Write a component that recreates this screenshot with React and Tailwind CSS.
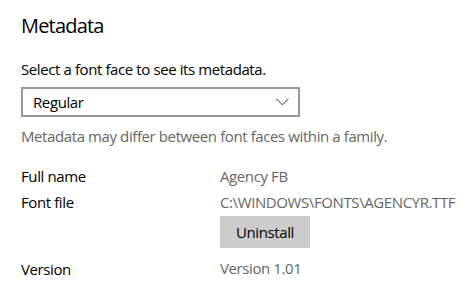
export default function App() {
  return (
    <div className="w-[474px] h-[281px] bg-white overflow-hidden pl-[21px] pt-[12px] text-black tracking-[-0.4px]" style={{ fontFamily: '"Open Sans", "Noto Sans", sans-serif' }}>
      <div className="text-[20px] leading-[28px] h-[28px] tracking-[-0.8px]">Metadata</div>
      <div className="mt-[19px] text-[15px] leading-[20px] h-[20px]">Select a font face to see its metadata.</div>
      <div className="mt-[8px] w-[279px] h-[30px] border-2 border-[#999999] flex items-center justify-between pl-[10px] pr-[9px]">
        <span className="text-[15px] leading-[20px]">Regular</span>
        <svg width="13" height="8" viewBox="0 0 13 8" fill="none">
          <path d="M0.5 0.8 L6.5 6.8 L12.5 0.8" stroke="#333" strokeWidth="1" />
        </svg>
      </div>
      <div className="mt-[9px] text-[15px] leading-[20px] h-[20px] text-[#666666]">Metadata may differ between font faces within a family.</div>
      <div className="mt-[17px] flex">
        <div className="w-[199px] flex flex-col text-[15px] leading-[26px]">
          <div>Full name</div>
          <div>Font file</div>
          <div className="h-[41px]"></div>
          <div>Version</div>
        </div>
        <div className="flex flex-col text-[15px] leading-[26px] text-[#666666]">
          <div>Agency FB</div>
          <div>C:\WINDOWS\FONTS\AGENCYR.TTF</div>
          <button className="mt-[1px] w-[90px] h-[32px] bg-[#cccccc] text-black text-[15px] leading-[20px] tracking-[-0.4px]">Uninstall</button>
          <div className="mt-[7px]">Version 1.01</div>
        </div>
      </div>
    </div>
  );
}
